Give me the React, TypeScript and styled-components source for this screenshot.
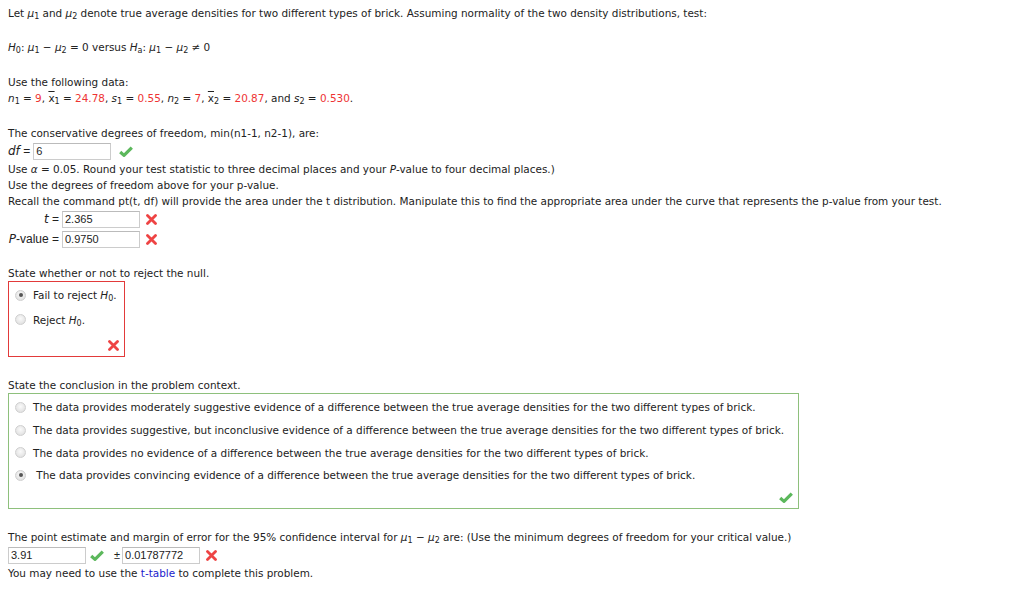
import React from "react";
import styled, { createGlobalStyle } from "styled-components";

const GlobalStyle = createGlobalStyle`
  html, body {
    margin: 0;
    padding: 0;
    background: #ffffff;
  }
  body {
    font-family: "DejaVu Sans", Verdana, sans-serif;
    font-size: 10.45px;
    color: #222222;
  }
`;

const Page = styled.div`
  padding: 5px 8px 0 8px;
  width: 1008px;
`;

const Line = styled.div<{ $mt?: number }>`
  line-height: 16px;
  height: 16px;
  white-space: nowrap;
  margin-top: ${({ $mt }) => $mt ?? 0}px;
`;

const M = styled.i`
  font-family: "DejaVu Sans", Verdana, sans-serif;
  font-style: italic;
`;

const Sub = styled.sub`
  font-size: 8px;
  vertical-align: -2px;
  line-height: 0;
  font-style: normal;
`;

const Red = styled.span`
  color: #ee3333;
`;

const Bar = styled.span`
  text-decoration: overline;
`;

const Link = styled.span`
  color: #1a1acc;
`;

const Row = styled.div<{ $h?: number }>`
  display: flex;
  align-items: center;
  height: ${({ $h }) => $h ?? 20}px;
  white-space: nowrap;
`;

const Label = styled.span<{ $w?: number }>`
  font-family: "Liberation Sans", Arial, sans-serif;
  font-size: 12px;
  width: ${({ $w }) => ($w ? `${$w}px` : "auto")};
  text-align: right;
  padding-right: 3px;
  box-sizing: border-box;
`;

const PlusMinus = styled.span`
  font-family: "Liberation Sans", Arial, sans-serif;
  font-size: 11px;
  margin: 0 2px 0 10px;
`;

const Field = styled.div<{ $w?: number }>`
  width: ${({ $w }) => $w ?? 78}px;
  height: 17px;
  box-sizing: border-box;
  border: 1px solid #cccccc;
  border-top-color: #bbbbbb;
  font-family: "Liberation Sans", Arial, sans-serif;
  font-size: 11px;
  line-height: 15px;
  padding-left: 2px;
  color: #222;
`;

const Mark = styled.span<{ $ml?: number }>`
  display: inline-flex;
  margin-left: ${({ $ml }) => $ml ?? 6}px;
`;

const Check = () => (
  <svg width="14" height="11" viewBox="0 0 14 11">
    <path d="M1.2 6 L5 9.4 L12.8 1.6" stroke="#5cb85c" strokeWidth="3.2" fill="none" strokeLinejoin="round" />
  </svg>
);

const Cross = () => (
  <svg width="11" height="11" viewBox="0 0 11 11">
    <path d="M1.5 1.5 L9.5 9.5 M9.5 1.5 L1.5 9.5" stroke="#ee4444" strokeWidth="2.8" strokeLinecap="round" />
  </svg>
);

const Box = styled.div<{ $color: string; $w: number; $h: number }>`
  width: ${({ $w }) => $w}px;
  height: ${({ $h }) => $h}px;
  box-sizing: border-box;
  border: 1px solid ${({ $color }) => $color};
  position: relative;
  padding-top: 2px;
`;

const Option = styled.div<{ $h?: number }>`
  display: flex;
  align-items: center;
  height: ${({ $h }) => $h ?? 23}px;
  padding-left: 6px;
  white-space: nowrap;
`;

const OptionText = styled.span`
  white-space: pre;
`;

const Radio = styled.span<{ $on?: boolean }>`
  width: 11px;
  height: 11px;
  flex: none;
  border-radius: 50%;
  box-sizing: border-box;
  border: 1px solid #cfcfcf;
  background: radial-gradient(circle at 50% 40%, #fafafa 0%, #e4e4e4 70%, #d6d6d6 100%);
  margin-right: 7px;
  display: inline-flex;
  align-items: center;
  justify-content: center;
  &::after {
    content: "";
    width: 4px;
    height: 4px;
    border-radius: 50%;
    background: ${({ $on }) => ($on ? "#555" : "transparent")};
  }
`;

const Corner = styled.span`
  position: absolute;
  right: 5px;
  bottom: 5px;
  display: inline-flex;
`;

const H0 = () => (
  <>
    <M>H</M>
    <Sub>0</Sub>
  </>
);

const Mu = ({ n }: { n: number }) => (
  <>
    <M>μ</M>
    <Sub>{n}</Sub>
  </>
);

export default function App() {
  const options = [
    "The data provides moderately suggestive evidence of a difference between the true average densities for the two different types of brick.",
    "The data provides suggestive, but inconclusive evidence of a difference between the true average densities for the two different types of brick.",
    "The data provides no evidence of a difference between the true average densities for the two different types of brick.",
    " The data provides convincing evidence of a difference between the true average densities for the two different types of brick.",
  ];
  return (
    <Page>
      <GlobalStyle />
      <Line>
        Let <Mu n={1} /> and <Mu n={2} /> denote true average densities for two different types of brick. Assuming
        normality of the two density distributions, test:
      </Line>
      <Line $mt={18}>
        <H0 />: <Mu n={1} /> − <Mu n={2} /> = 0 versus <M>H</M>
        <Sub>a</Sub>: <Mu n={1} /> − <Mu n={2} /> ≠ 0
      </Line>
      <Line $mt={19}>Use the following data:</Line>
      <Line>
        <M>n</M>
        <Sub>1</Sub> = <Red>9</Red>, <Bar>x</Bar>
        <Sub>1</Sub> = <Red>24.78</Red>, <M>s</M>
        <Sub>1</Sub> = <Red>0.55</Red>, <M>n</M>
        <Sub>2</Sub> = <Red>7</Red>, <Bar>x</Bar>
        <Sub>2</Sub> = <Red>20.87</Red>, and <M>s</M>
        <Sub>2</Sub> = <Red>0.530</Red>.
      </Line>
      <Line $mt={19}>The conservative degrees of freedom, min(n1-1, n2-1), are:</Line>
      <Row>
        <Label>
          <M>df</M> =
        </Label>
        <Field>6</Field>
        <Mark $ml={8}>
          <Check />
        </Mark>
      </Row>
      <Line>
        Use <M>α</M> = 0.05. Round your test statistic to three decimal places and your <M>P</M>-value to four
        decimal places.)
      </Line>
      <Line>Use the degrees of freedom above for your p-value.</Line>
      <Line>
        Recall the command pt(t, df) will provide the area under the t distribution. Manipulate this to find the
        appropriate area under the curve that represents the p-value from your test.
      </Line>
      <Row>
        <Label $w={54}>
          <M>t</M> =
        </Label>
        <Field>2.365</Field>
        <Mark>
          <Cross />
        </Mark>
      </Row>
      <Row>
        <Label $w={54}>
          <M>P</M>-value =
        </Label>
        <Field>0.9750</Field>
        <Mark>
          <Cross />
        </Mark>
      </Row>
      <Line $mt={16}>State whether or not to reject the null.</Line>
      <Box $color="#e23a3a" $w={117} $h={76}>
        <Option $h={22}>
          <Radio $on />
          <OptionText>
            Fail to reject <H0 />.
          </OptionText>
        </Option>
        <Option $h={27}>
          <Radio />
          <OptionText>
            Reject <H0 />.
          </OptionText>
        </Option>
        <Corner>
          <Cross />
        </Corner>
      </Box>
      <Line $mt={20}>State the conclusion in the problem context.</Line>
      <Box $color="#8ec07c" $w={791} $h={116}>
        {options.map((o, i) => (
          <Option key={i} $h={22.7}>
            <Radio $on={i === 3} />
            <OptionText>{o}</OptionText>
          </Option>
        ))}
        <Corner>
          <Check />
        </Corner>
      </Box>
      <Line $mt={20}>
        The point estimate and margin of error for the 95% confidence interval for <Mu n={1} /> − <Mu n={2} /> are:
        (Use the minimum degrees of freedom for your critical value.)
      </Line>
      <Row>
        <Field>3.91</Field>
        <Mark $ml={4}>
          <Check />
        </Mark>
        <PlusMinus>±</PlusMinus>
        <Field>0.01787772</Field>
        <Mark>
          <Cross />
        </Mark>
      </Row>
      <Line>
        You may need to use the <Link>t-table</Link> to complete this problem.
      </Line>
    </Page>
  );
}
